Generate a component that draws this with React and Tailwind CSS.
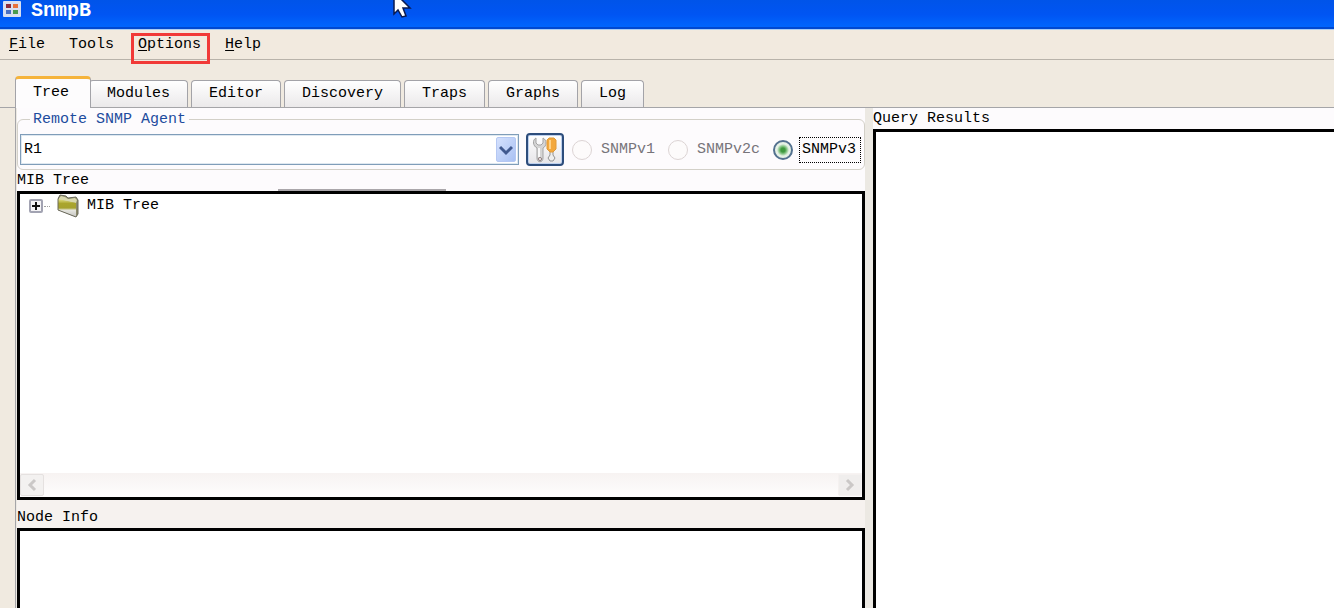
import React, { useState } from "react";
import clsx from "clsx";

const menus = ["File", "Tools", "Options", "Help"];
const tabs = ["Tree", "Modules", "Editor", "Discovery", "Traps", "Graphs", "Log"];
const versions = [
  { id: "v1", label: "SNMPv1" },
  { id: "v2c", label: "SNMPv2c" },
  { id: "v3", label: "SNMPv3" },
];

const AppIcon = () => (
  <svg width="18" height="16" viewBox="0 0 18 16" aria-hidden="true">
    <rect width="18" height="16" rx="1" fill="#d9dff0" />
    <rect x="3" y="3" width="5" height="4" fill="#8c2a3c" />
    <rect x="10" y="3" width="5" height="4" fill="#e8703a" />
    <rect x="3" y="9" width="5" height="4" fill="#4a6fc4" />
    <rect x="10" y="9" width="5" height="4" fill="#4b9a50" />
  </svg>
);

const FolderIcon = () => (
  <svg width="24" height="24" viewBox="0 0 24 24" aria-hidden="true">
    <defs>
      <linearGradient id="folder" x1="0" y1="0" x2="0" y2="1">
        <stop offset="0" stopColor="#e4e28a" />
        <stop offset="0.25" stopColor="#aaa52c" />
        <stop offset="0.5" stopColor="#a6a22e" />
        <stop offset="0.62" stopColor="#e6e6e0" />
        <stop offset="1" stopColor="#c4c4c0" />
      </linearGradient>
    </defs>
    <path d="M2 4 L4 1 L10 2 L12 4 L20 3 L22 6 V20 L20 23 L2 16 Z" fill="#8b8a6a" />
    <path d="M3 4 L5 2 L9 3 L12 5 L19 4 L21 6 L20 9 L3 6 Z" fill="#d9d8ae" />
    <path d="M2 5 L11 7 L20 9 V23 L2 16 Z" fill="url(#folder)" />
    <path
      d="M2 5 L4 1 L10 2 L12 4 L20 3 L22 6 V20 L20 23 L2 16 Z"
      fill="none"
      stroke="#6b6a5c"
      strokeLinejoin="round"
    />
  </svg>
);

const ToolsIcon = () => (
  <svg width="26" height="26" viewBox="0 0 26 26" aria-hidden="true">
    <path
      d="M4 1 C0 3 1 9 5 11 V21 C5 26 11 26 11 21 V11 C15 9 15 3 11 1 V6 L9 8 H6 L4 6 Z"
      fill="#d5d5d5"
      stroke="#a3a3a3"
    />
    <path d="M7 11 V20" stroke="#f8f8f8" strokeWidth="2" />
    <circle cx="8" cy="22" r="1.5" fill="#fff" stroke="#8a7777" />
    <path d="M18 14 H21 V18 L23 21 L21 24 H18 L16 21 L18 18 Z" fill="#eee" stroke="#929292" />
    <path d="M15 3 L17 1 H22 L24 3 V12 L21 15 H18 L15 12 Z" fill="#f3a83c" stroke="#e09a38" />
    <path d="M18 3 V12" stroke="#ffd288" strokeWidth="2" />
  </svg>
);

const Chevron = ({ path }) => (
  <svg width="14" height="14" viewBox="0 0 14 14" aria-hidden="true">
    <path d={path} fill="none" stroke="currentColor" strokeWidth="3" />
  </svg>
);

const TitleBar = () => (
  <header className="flex h-[30px] shrink-0 items-start gap-[10px] border-b border-[#a9cdf5] bg-linear-to-b from-[#0054e9] via-[#0055f3] to-[#0068ff] pl-[3px] shadow-[inset_0_-2px_0_#0048d0]">
    <div className="pt-px">
      <AppIcon />
    </div>
    <h1 className="text-[20px] leading-[22px] font-bold text-white">SnmpB</h1>
  </header>
);

const MenuBar = () => (
  <nav className="flex h-[30px] shrink-0 items-center gap-6 border-b border-[#b9b3aa] bg-[#f2eadf] pl-[9px]">
    {menus.map((name) => (
      <button key={name} type="button" className="relative pt-px leading-[20px]">
        {name === "Tools" ? (
          name
        ) : (
          <>
            <span className="underline underline-offset-2">{name[0]}</span>
            {name.slice(1)}
          </>
        )}
        {name === "Options" && (
          <span className="absolute -top-px -right-[9px] -left-[7px] h-[31px] border-3 border-[#f13a38]" />
        )}
      </button>
    ))}
  </nav>
);

const TabBar = ({ active, onChange }) => (
  <div role="tablist" className="flex h-[48px] shrink-0 items-end gap-[3px] border-b border-[#a5a5a8] pl-[15px]">
    {tabs.map((name) => (
      <button
        key={name}
        type="button"
        role="tab"
        aria-selected={active === name}
        onClick={() => onChange(name)}
        className={clsx(
          "rounded-t-[4px] border border-b-0 border-[#a3a3a8]",
          active === name
            ? "z-10 -mb-px h-[32px] border-t-3 border-t-[#f5b43c] bg-[#fdfcfd] pr-[21px] pb-px pl-[17px]"
            : "h-[27px] bg-linear-to-b from-white to-[#ebe9ea] px-[17px] pt-px nth-2:-ml-[5px]"
        )}
      >
        {name}
      </button>
    ))}
  </div>
);

const AgentBox = () => {
  const [version, setVersion] = useState("v3");

  return (
    <fieldset className="min-w-0 shrink-0 rounded-[6px] border border-[#d3d0c8] pt-[3px] pr-[3px] pb-[3px] pl-[2px]">
      <legend className="ml-[10px] px-[3px] pt-px leading-[21px] text-[#1d4c9e]">Remote SNMP Agent</legend>
      <div className="flex items-center">
        <div className="relative min-w-0 flex-1">
          <select
            aria-label="Remote SNMP Agent"
            className="block h-[31px] w-full appearance-none border border-[#7f9db9] bg-white pt-px pl-[3px] shadow-[inset_0_0_0_1px_#dfe8f0] outline-none"
          >
            <option>R1</option>
          </select>
          <span className="pointer-events-none absolute top-[3px] right-[3px] flex h-[25px] w-[20px] items-center justify-center rounded-[2px] border border-[#b5c8f3] bg-linear-to-br from-[#d5e1fd] to-[#a9c1f3] text-[#40598f]">
            <Chevron path="M1 4 L7 10 L13 4" />
          </span>
        </div>
        <button
          type="button"
          aria-label="Agent settings"
          className="ml-[7px] flex h-[33px] w-[38px] items-center justify-center rounded-[4px] border-2 border-[#2d4d7c] bg-linear-to-b from-white to-[#e6e5e8] shadow-[inset_0_0_0_1px_#bdd0ee]"
        >
          <ToolsIcon />
        </button>
        <div className="ml-2 flex gap-2">
          {versions.map(({ id, label }) => (
            <label
              key={id}
              className={clsx("flex items-center gap-[6px]", version === id ? "text-black" : "text-[#77747a]")}
            >
              <input
                type="radio"
                name="version"
                checked={version === id}
                onChange={() => setVersion(id)}
                className="size-5 appearance-none rounded-full border border-[#dcd4d4] bg-[#fdfbfb] checked:border-2 checked:border-[#53718f] checked:bg-[radial-gradient(circle,#3f9a3f_0_2px,#8cc98c_4px,#e6f1e6_6px)]"
              />
              <span
                className={clsx(
                  "border border-dotted pr-1 pl-[2px] leading-[24px]",
                  version === id ? "border-black" : "border-transparent"
                )}
              >
                {label}
              </span>
            </label>
          ))}
        </div>
      </div>
    </fieldset>
  );
};

const MibTree = () => (
  <section className="flex shrink-0 flex-col">
    <h2 className="relative pt-px leading-[20px]">
      MIB Tree
      <span className="absolute bottom-0 left-[261px] h-[2px] w-[168px] bg-[#aaa6aa]" />
    </h2>
    <div className="flex h-[309px] flex-col justify-between border-3 border-black bg-white">
      <ul role="tree" className="pl-[9px]">
        <li role="treeitem" className="flex h-6 items-center">
          <button
            type="button"
            aria-label="Expand"
            className="flex size-[14px] items-center justify-center rounded-[2px] border-2 border-[#a2a3b2] bg-[#f5f4f6]"
          >
            <svg width="8" height="8" viewBox="0 0 8 8" aria-hidden="true">
              <path d="M0 4 H8 M4 0 V8" stroke="#111" strokeWidth="2" />
            </svg>
          </button>
          <span className="mr-[6px] ml-px w-[6px] border-t border-dotted border-[#a0a0a0]" />
          <FolderIcon />
          <span className="pt-px pl-[7px]">MIB Tree</span>
        </li>
      </ul>
      <div className="flex h-6 items-center justify-between bg-linear-to-b from-[#f7f3f2] to-[#fefdfd]">
        <button
          type="button"
          aria-label="Scroll left"
          className="flex h-[22px] w-6 items-center justify-center rounded-[2px] border border-[#e5e1e0] bg-[#f3f1f0] text-[#cbc8c7]"
        >
          <Chevron path="M10 2 L5 7 L10 12" />
        </button>
        <button
          type="button"
          aria-label="Scroll right"
          className="flex h-[22px] w-6 items-center justify-center rounded-[2px] border border-[#f5f1f0] bg-[#f0eeed] text-[#cbc8c7]"
        >
          <Chevron path="M4 2 L9 7 L4 12" />
        </button>
      </div>
    </div>
  </section>
);

export default function App() {
  const [tab, setTab] = useState("Tree");

  return (
    <div className="relative flex h-screen flex-col overflow-hidden bg-[#f0eae0] font-['Liberation_Mono',monospace] text-[15px] text-black">
      <TitleBar />
      <MenuBar />
      <TabBar active={tab} onChange={setTab} />

      <main className="ml-[15px] grid min-h-0 flex-1 grid-cols-[848fr_461fr] gap-2 border-l border-[#a5a5a8] bg-[#ece9e3] pl-px">
        <div className="flex min-h-0 min-w-0 flex-col bg-[#fdfbfd]">
          <AgentBox />
          <MibTree />
          <section className="flex min-h-0 flex-1 flex-col">
            <h2 className="bg-[#f6f2ef] pt-2 leading-[20px]">Node Info</h2>
            <div className="flex-1 border-3 border-b-0 border-black bg-white" />
          </section>
        </div>

        <section className="flex min-h-0 min-w-0 flex-col bg-[#fdfbfd]">
          <h2 className="pt-px leading-[20px]">Query Results</h2>
          <div className="flex-1 border-3 border-r-0 border-b-0 border-black bg-white" />
        </section>
      </main>

      {/* mouse pointer */}
      <svg
        width="20"
        height="19"
        viewBox="0 0 20 19"
        className="pointer-events-none absolute top-0 left-[393px]"
        aria-hidden="true"
      >
        <path
          d="M1 -4 V14 L5 10 L9 17 L13 16 L10 8 H17 L5 -4 Z"
          fill="#fff"
          stroke="#0a1a50"
          strokeWidth="1.5"
        />
      </svg>
    </div>
  );
}
